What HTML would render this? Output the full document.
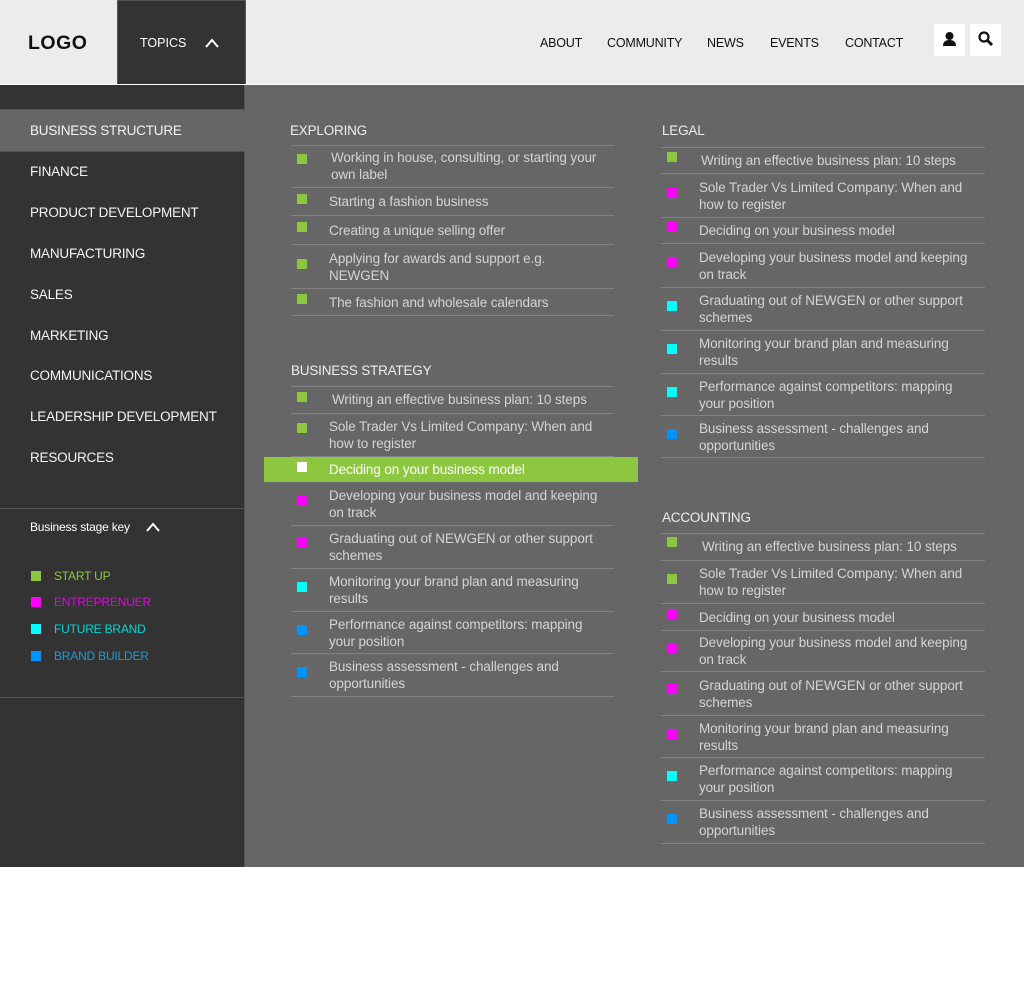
<!DOCTYPE html>
<html><head><meta charset="utf-8"><style>
*{margin:0;padding:0;box-sizing:border-box}
body{width:1024px;height:1000px;background:#fff;font-family:"Liberation Sans",sans-serif;position:relative;overflow:hidden}
.hdr{position:absolute;left:0;top:0;width:1024px;height:84px;background:#ececec}
.logo{position:absolute;left:28px;top:32px;font-size:19.5px;font-weight:bold;color:#111;letter-spacing:.5px}
.topics{position:absolute;left:117px;top:0;width:129px;height:84px;background:#333;border:1px solid #555;border-bottom:none}
.topics span{position:absolute;left:22px;top:35px;color:#fff;font-size:12.5px}
.nav{position:absolute;top:36px;font-size:12.5px;color:#111;letter-spacing:-.2px}
.ib{position:absolute;top:24px;width:31px;height:32px;background:#fff}
.main{position:absolute;left:0;top:85px;width:1024px;height:782px;background:#666}
.side{position:absolute;left:0;top:85px;width:245px;height:782px;background:#333;border-right:1px solid #555}
.sel{position:absolute;left:0;top:110px;width:246px;height:41px;background:#666}
.si{position:absolute;left:30px;color:#f4f4f4;font-size:13.5px;letter-spacing:-.2px}
.hl{position:absolute;left:0;width:245px;border-top:1px solid #555}
.key{position:absolute;left:31px;width:10px;height:10px}
.kt{position:absolute;left:54px;font-size:12px;letter-spacing:-.2px}
.h{position:absolute;color:#eee;font-size:13.5px;letter-spacing:-.2px}
.r{position:absolute;border-bottom:1px solid #828282;display:flex;align-items:center;color:#d4d4d4;font-size:13.5px;line-height:17px;letter-spacing:-.1px;white-space:nowrap}
.r i{position:absolute;left:6px;top:50%;margin-top:-8px;width:10px;height:10px}
.r span{margin-left:38px}
.g{background:#8dc63f}.m{background:#ff00ff}.c{background:#00ffff}.b{background:#0094ff}
</style></head><body>
<div class="hdr"></div>
<div class="logo">LOGO</div>
<div class="topics"><span>TOPICS</span>
<svg style="position:absolute;left:87px;top:37px" width="14" height="10"><path d="M1 9 L7 2 L13 9" stroke="#fff" stroke-width="2" fill="none"/></svg></div>
<div class="nav" style="left:540px">ABOUT</div>
<div class="nav" style="left:607px">COMMUNITY</div>
<div class="nav" style="left:707px">NEWS</div>
<div class="nav" style="left:770px">EVENTS</div>
<div class="nav" style="left:845px">CONTACT</div>
<div class="ib" style="left:934px"><svg width="31" height="32"><circle cx="15.5" cy="12" r="4" fill="#111"/><path d="M9 22 Q9 16 15.5 16 Q22 16 22 22 Z" fill="#111"/></svg></div>
<div class="ib" style="left:970px"><svg width="31" height="32"><circle cx="14" cy="13" r="4.5" stroke="#111" stroke-width="2.2" fill="none"/><path d="M17 16 L22 21" stroke="#111" stroke-width="3"/></svg></div>
<div class="main"></div>
<div class="side"></div>
<div class="hl" style="top:109px"></div>
<div class="sel"></div>
<div class="hl" style="top:151px"></div>
<div class="si" style="top:123px">BUSINESS STRUCTURE</div>
<div class="si" style="top:164px">FINANCE</div>
<div class="si" style="top:205px">PRODUCT DEVELOPMENT</div>
<div class="si" style="top:246px">MANUFACTURING</div>
<div class="si" style="top:287px">SALES</div>
<div class="si" style="top:328px">MARKETING</div>
<div class="si" style="top:368px">COMMUNICATIONS</div>
<div class="si" style="top:409px">LEADERSHIP DEVELOPMENT</div>
<div class="si" style="top:450px">RESOURCES</div>
<div class="hl" style="top:508px"></div>
<div style="position:absolute;left:30px;top:520px;color:#fff;font-size:12px;letter-spacing:-.2px">Business stage key</div>
<svg style="position:absolute;left:146px;top:522px" width="14" height="10"><path d="M1 9 L7 2 L13 9" stroke="#fff" stroke-width="2" fill="none"/></svg>
<div class="key g" style="top:571px"></div><div class="kt" style="top:569px;color:#8dc63f">START UP</div>
<div class="key m" style="top:597px"></div><div class="kt" style="top:595px;color:#e600e6">ENTREPRENUER</div>
<div class="key c" style="top:624px"></div><div class="kt" style="top:622px;color:#00d8d8">FUTURE BRAND</div>
<div class="key b" style="top:651px"></div><div class="kt" style="top:649px;color:#1a9ad8">BRAND BUILDER</div>
<div class="hl" style="top:697px"></div>

<div class="h" style="left:290px;top:123px">EXPLORING</div>
<div style="position:absolute;left:291px;top:145px;width:323px;border-top:1px solid #828282"></div>
<div class="r" style="left:291px;top:145px;width:323px;height:43px"><i class="g" style="margin-top:-12px"></i><span style="margin-left:40px">Working in house, consulting, or starting your<br>own label</span></div>
<div class="r" style="left:291px;top:188px;width:323px;height:28px"><i class="g"></i><span>Starting a fashion business</span></div>
<div class="r" style="left:291px;top:216px;width:323px;height:29px"><i class="g"></i><span>Creating a unique selling offer</span></div>
<div class="r" style="left:291px;top:245px;width:323px;height:44px"><i class="g"></i><span>Applying for awards and support e.g.<br>NEWGEN</span></div>
<div class="r" style="left:291px;top:289px;width:323px;height:27px"><i class="g"></i><span>The fashion and wholesale calendars</span></div>

<div class="h" style="left:291px;top:363px">BUSINESS STRATEGY</div>
<div style="position:absolute;left:291px;top:386px;width:323px;border-top:1px solid #828282"></div>
<div class="r" style="left:291px;top:386px;width:323px;height:28px"><i class="g"></i><span style="margin-left:41px">Writing an effective business plan: 10 steps</span></div>
<div class="r" style="left:291px;top:414px;width:323px;height:43px"><i class="g" style="margin-top:-12px"></i><span>Sole Trader Vs Limited Company: When and<br>how to register</span></div>
<div style="position:absolute;left:264px;top:457px;width:374px;height:25px;background:#8dc63f"></div>
<div class="r" style="left:291px;top:457px;width:323px;height:25px;border:none;color:#fff"><i style="background:#fff"></i><span>Deciding on your business model</span></div>
<div class="r" style="left:291px;top:482px;width:323px;height:44px"><i class="m"></i><span>Developing your business model and keeping<br>on track</span></div>
<div class="r" style="left:291px;top:526px;width:323px;height:43px"><i class="m" style="margin-top:-10px"></i><span>Graduating out of NEWGEN or other support<br>schemes</span></div>
<div class="r" style="left:291px;top:569px;width:323px;height:43px"><i class="c"></i><span>Monitoring your brand plan and measuring<br>results</span></div>
<div class="r" style="left:291px;top:612px;width:323px;height:42px"><i class="b"></i><span>Performance against competitors: mapping<br>your position</span></div>
<div class="r" style="left:291px;top:654px;width:323px;height:43px"><i class="b"></i><span>Business assessment - challenges and<br>opportunities</span></div>

<div class="h" style="left:662px;top:123px">LEGAL</div>
<div style="position:absolute;left:661px;top:147px;width:324px;border-top:1px solid #828282"></div>
<div class="r" style="left:661px;top:147px;width:324px;height:27px"><i class="g"></i><span style="margin-left:40px">Writing an effective business plan: 10 steps</span></div>
<div class="r" style="left:661px;top:174px;width:324px;height:44px"><i class="m"></i><span>Sole Trader Vs Limited Company: When and<br>how to register</span></div>
<div class="r" style="left:661px;top:218px;width:324px;height:26px"><i class="m" style="margin-top:-10px"></i><span>Deciding on your business model</span></div>
<div class="r" style="left:661px;top:244px;width:324px;height:44px"><i class="m"></i><span>Developing your business model and keeping<br>on track</span></div>
<div class="r" style="left:661px;top:288px;width:324px;height:43px"><i class="c"></i><span>Graduating out of NEWGEN or other support<br>schemes</span></div>
<div class="r" style="left:661px;top:331px;width:324px;height:43px"><i class="c"></i><span>Monitoring your brand plan and measuring<br>results</span></div>
<div class="r" style="left:661px;top:374px;width:324px;height:42px"><i class="c"></i><span>Performance against competitors: mapping<br>your position</span></div>
<div class="r" style="left:661px;top:416px;width:324px;height:42px"><i class="b"></i><span>Business assessment - challenges and<br>opportunities</span></div>

<div class="h" style="left:662px;top:510px">ACCOUNTING</div>
<div style="position:absolute;left:661px;top:533px;width:324px;border-top:1px solid #828282"></div>
<div class="r" style="left:661px;top:533px;width:324px;height:28px"><i class="g" style="margin-top:-10px"></i><span style="margin-left:41px">Writing an effective business plan: 10 steps</span></div>
<div class="r" style="left:661px;top:561px;width:324px;height:43px"><i class="g"></i><span>Sole Trader Vs Limited Company: When and<br>how to register</span></div>
<div class="r" style="left:661px;top:604px;width:324px;height:27px"><i class="m"></i><span>Deciding on your business model</span></div>
<div class="r" style="left:661px;top:631px;width:324px;height:41px"><i class="m"></i><span>Developing your business model and keeping<br>on track</span></div>
<div class="r" style="left:661px;top:672px;width:324px;height:44px"><i class="m" style="margin-top:-10px"></i><span>Graduating out of NEWGEN or other support<br>schemes</span></div>
<div class="r" style="left:661px;top:716px;width:324px;height:42px"><i class="m"></i><span>Monitoring your brand plan and measuring<br>results</span></div>
<div class="r" style="left:661px;top:758px;width:324px;height:43px"><i class="c"></i><span>Performance against competitors: mapping<br>your position</span></div>
<div class="r" style="left:661px;top:801px;width:324px;height:43px"><i class="b"></i><span>Business assessment - challenges and<br>opportunities</span></div>
</body></html>
